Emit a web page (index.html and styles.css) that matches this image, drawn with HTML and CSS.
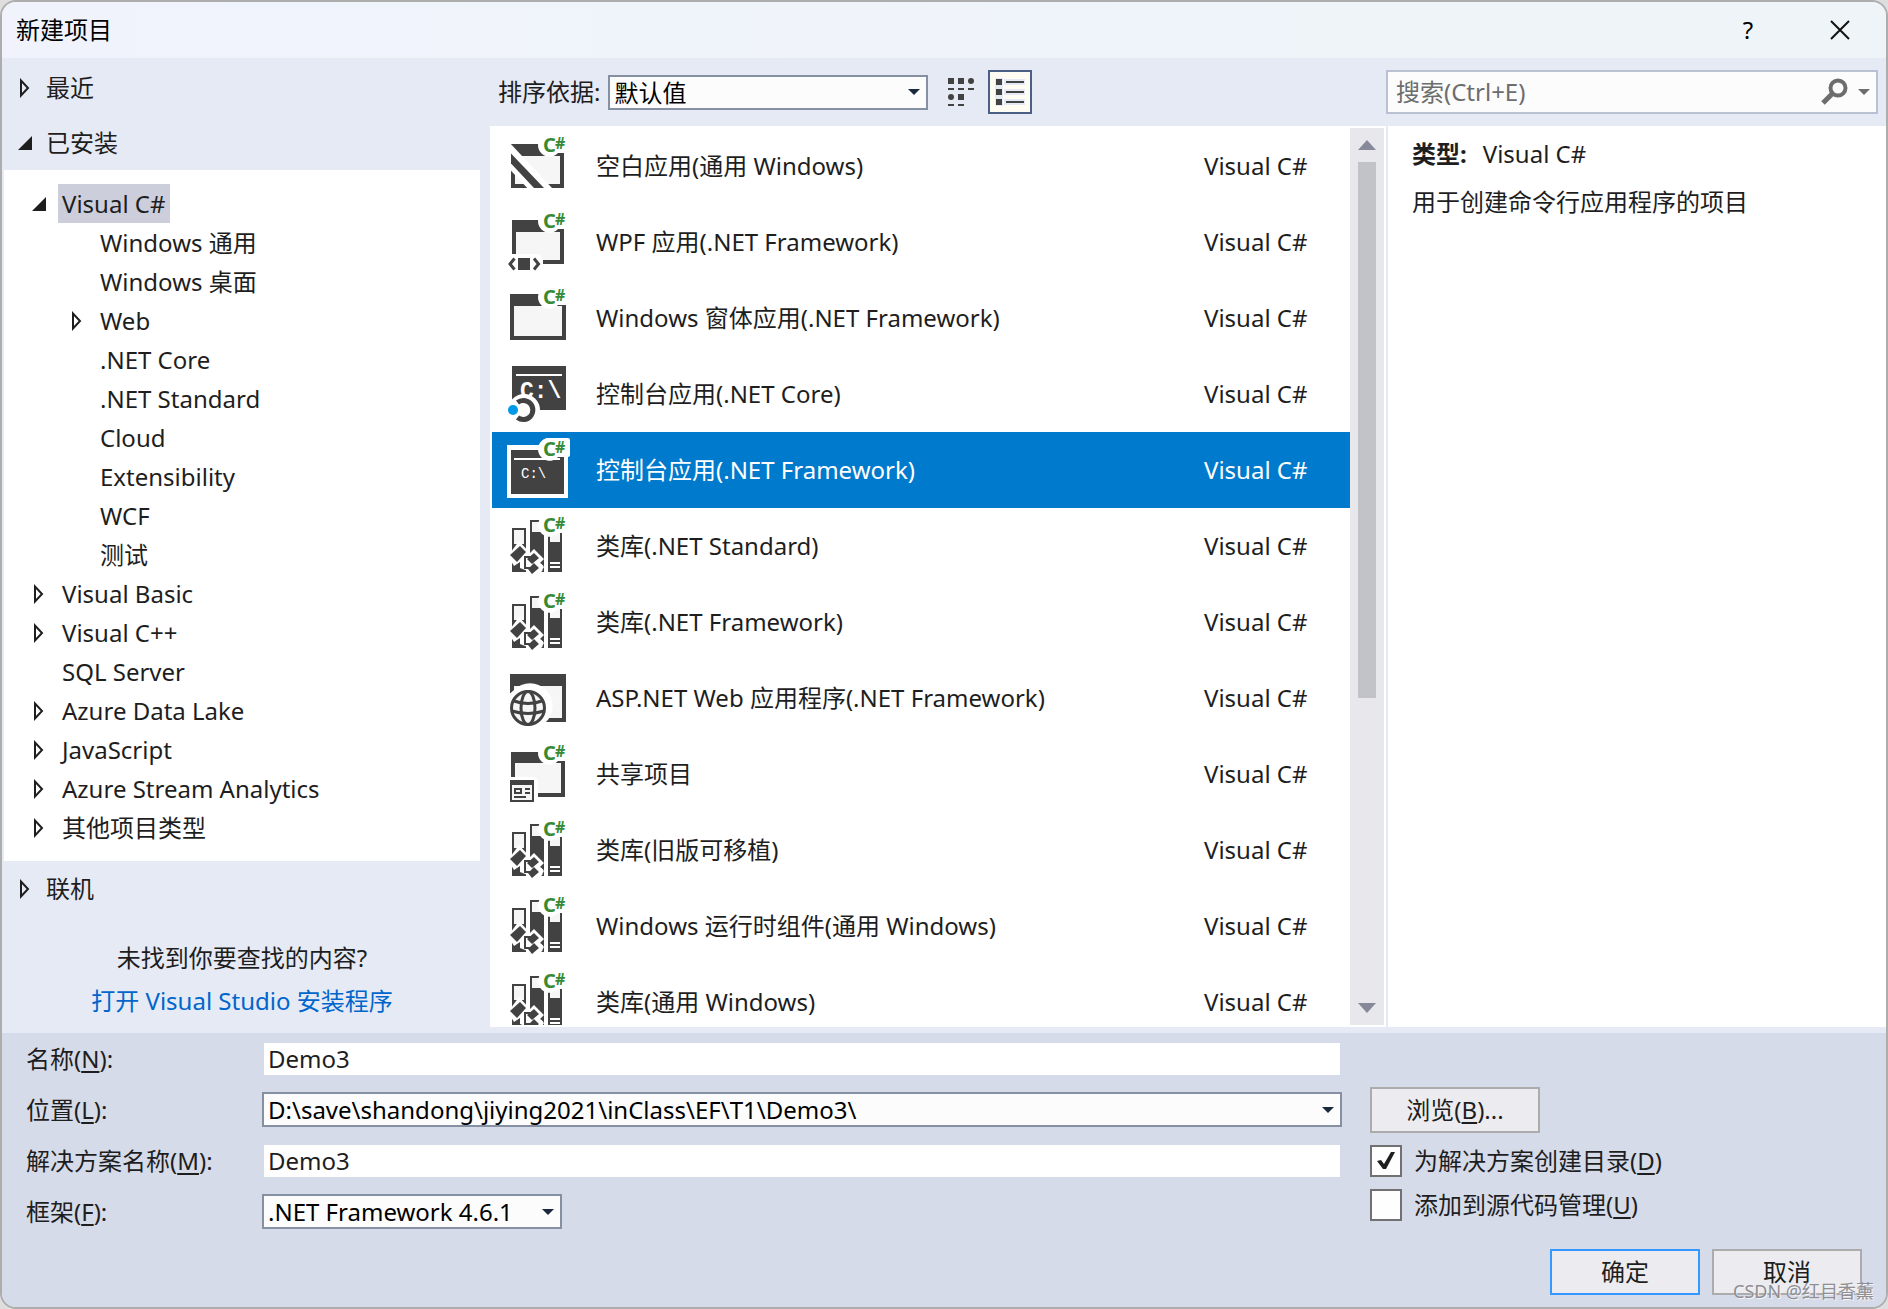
FILE: index.html
```html
<!DOCTYPE html>
<html lang="zh-CN">
<head>
    <meta charset="UTF-8">
    <meta name="viewport" content="width=device-width, initial-scale=1.0">
    <title>新建项目</title>
    <link rel="stylesheet" href="styles.css">
</head>
<body>
    <!-- shared icons -->
    <svg class="sprite" aria-hidden="true">
        <symbol id="closed" viewBox="0 0 12 20">
            <path d="M2 2.5V17.500L9 10Z" fill="none" stroke="#1e1e1e" stroke-width="2"/>
        </symbol>
        <symbol id="open" viewBox="0 0 14 14">
            <path d="M14 0V14H0Z" fill="#1e1e1e"/>
        </symbol>
        <symbol id="csharp" viewBox="0 0 64 64">
            <path d="M46 0H62Q64 0 64 2V17Q64 19 62 19H52A11.500 11.500 0 1 1 46 0Z" fill="#fff"/>
            <text class="cs" x="37" y="18" font-size="20">C</text>
            <text class="cs" x="49" y="15" font-size="16">#</text>
        </symbol>
        <symbol id="blank" viewBox="0 0 64 64">
            <path d="M5 10H58V54H5Z" fill="#424242"/>
            <path d="M9 22H54V50H9Z" fill="#f6f6f6"/>
            <path d="M-2 16L42 63" stroke="#fff" stroke-width="18"/>
            <path d="M5 19.500L38 54H28L5 29.500Z" fill="#424242"/>
            <path d="M0 54H62V64H0Z" fill="#fff"/>
            <use href="#csharp"/>
        </symbol>
        <symbol id="wpf" viewBox="0 0 64 64">
            <path d="M6 10H58V54H6Z" fill="#424242"/>
            <path d="M10 22H54V50H10Z" fill="#f6f6f6"/>
            <path d="M0 44H33L37 50V64H0Z" fill="#fff"/>
            <path d="M12 48H24V60H12Z" fill="#424242"/>
            <path d="M8.500 48.500L4 54L8.500 59.500M28 48.500L32.500 54L28 59.500" fill="none" stroke="#424242" stroke-width="3"/>
            <use href="#csharp"/>
        </symbol>
        <symbol id="form" viewBox="0 0 64 64">
            <path d="M4 8H60V54H4Z" fill="#424242"/>
            <path d="M8 20H56V50H8Z" fill="#f6f6f6"/>
            <use href="#csharp"/>
        </symbol>
        <symbol id="core" viewBox="0 0 64 64">
            <path d="M6 4H60V48H6Z" fill="#424242"/>
            <path d="M10 12H56V14H10Z" fill="#fff"/>
            <text class="prompt" x="14" y="36" font-size="23" font-weight="bold">C:\</text>
            <circle cx="18" cy="48" r="16" fill="#fff"/>
            <path d="M11.500 40.500A9.500 9.500 0 1 1 11.500 55.500" fill="none" stroke="#424242" stroke-width="5"/>
            <circle cx="7" cy="48" r="5" fill="#0099e5"/>
        </symbol>
        <symbol id="console" viewBox="0 0 64 64">
            <path d="M1 7H62V60H1Z" fill="#fff"/>
            <path d="M5 12H58V56H5Z" fill="#424242"/>
            <path d="M8 20H54V22H8Z" fill="#fff"/>
            <text class="prompt" x="15" y="40" font-size="14">C:\</text>
            <use href="#csharp"/>
        </symbol>
        <symbol id="library" viewBox="0 0 64 64">
            <path d="M6 14H20V58H6ZM24 6H38V58H24ZM42 16H56V58H42Z" fill="#424242"/>
            <path d="M8 16H18V30H8ZM26 8H36V18H26ZM44 16H54V28H44Z" fill="#f6f6f6"/>
            <path d="M44 48H54V50H44ZM44 52H54V54H44Z" fill="#fff"/>
            <path d="M13 27L24 39L28 35L38 45L34 49L38 53L35 58H24L14 54V48L8 52L2 42Z" fill="#fff"/>
            <path d="M6 51L10 54H14V58H6Z" fill="#424242"/>
            <path d="M14 32L20 38L11 48L4 41Z" fill="#424242"/>
            <path d="M18 43H27M19 43V54H26" fill="none" stroke="#424242" stroke-width="2"/>
            <path d="M28 39L33 44L26 50L21 45ZM28 49L33 54L26 60L22 55Z" fill="#424242"/>
            <path d="M34 50L36 52L34 54M34 55L36 57" fill="none" stroke="#fff" stroke-width="2"/>
            <use href="#csharp"/>
        </symbol>
        <symbol id="web" viewBox="0 0 64 64">
            <path d="M4 8H60V56H4Z" fill="#424242"/>
            <path d="M8 20H56V52H8Z" fill="#f6f6f6"/>
            <path d="M0 60V31L8 24A22 22 0 0 1 40 56L36 62Z" fill="#fff"/>
            <g fill="none" stroke="#424242" stroke-width="3">
                <circle cx="22" cy="42" r="16.500" fill="#f6f6f6"/>
                <ellipse cx="22" cy="42" rx="7" ry="16.500"/>
                <path d="M8 35Q22 40 36 35M6 45Q22 50 38 45"/>
            </g>
        </symbol>
        <symbol id="shared" viewBox="0 0 64 64">
            <path d="M5 10H59V55H5Z" fill="#424242"/>
            <path d="M9 21H55V51H9Z" fill="#f6f6f6"/>
            <path d="M0 35H28L32 38V64H0Z" fill="#fff"/>
            <path d="M4 38H28V60H4Z" fill="#424242"/>
            <path d="M6 43H26V58H6Z" fill="#f6f6f6"/>
            <path d="M9 47H15V51H9ZM19 47H24M19 51H24M8 55H20" fill="none" stroke="#424242" stroke-width="2"/>
            <use href="#csharp"/>
        </symbol>
    </svg>

    <div class="dialog">
        <header class="titlebar">
            <h1>新建项目</h1>
            <button class="caption-btn" type="button" aria-label="帮助">?</button>
            <button class="caption-btn" type="button" aria-label="关闭">
                <svg width="20" height="20" viewBox="0 0 20 20"><path d="M1 1L19 19M19 1L1 19" stroke="#111" stroke-width="2"/></svg>
            </button>
        </header>

        <main class="content">
            <nav class="sidebar">
                <div class="group"><svg class="arrow"><use href="#closed"/></svg>最近</div>
                <div class="group"><svg class="arrow open"><use href="#open"/></svg>已安装</div>
                <ul class="tree">
                    <li><svg class="arrow open"><use href="#open"/></svg><span class="current">Visual C#</span></li>
                    <li class="sub"><span>Windows 通用</span></li>
                    <li class="sub"><span>Windows 桌面</span></li>
                    <li class="sub"><svg class="arrow"><use href="#closed"/></svg><span>Web</span></li>
                    <li class="sub"><span>.NET Core</span></li>
                    <li class="sub"><span>.NET Standard</span></li>
                    <li class="sub"><span>Cloud</span></li>
                    <li class="sub"><span>Extensibility</span></li>
                    <li class="sub"><span>WCF</span></li>
                    <li class="sub"><span>测试</span></li>
                    <li><svg class="arrow"><use href="#closed"/></svg><span>Visual Basic</span></li>
                    <li><svg class="arrow"><use href="#closed"/></svg><span>Visual C++</span></li>
                    <li><span>SQL Server</span></li>
                    <li><svg class="arrow"><use href="#closed"/></svg><span>Azure Data Lake</span></li>
                    <li><svg class="arrow"><use href="#closed"/></svg><span>JavaScript</span></li>
                    <li><svg class="arrow"><use href="#closed"/></svg><span>Azure Stream Analytics</span></li>
                    <li><svg class="arrow"><use href="#closed"/></svg><span>其他项目类型</span></li>
                </ul>
                <div class="group"><svg class="arrow"><use href="#closed"/></svg>联机</div>
                <div class="missing">
                    <p>未找到你要查找的内容?</p>
                    <a href="#">打开 Visual Studio 安装程序</a>
                </div>
            </nav>

            <section class="templates">
                <div class="toolbar">
                    <label for="sort">排序依据:</label>
                    <select id="sort" class="sort"><option>默认值</option></select>
                    <button class="view-btn" type="button" aria-label="小图标">
                        <svg width="32" height="32" viewBox="0 0 32 32" fill="#424242">
                            <path d="M6 2H12V8H6ZM16 2H22V8H16ZM16 18H22V24H16ZM6 12H12V14H6ZM16 12H22V14H16ZM26 12H32V14H26ZM6 28H12V30H6ZM16 28H22V30H16Z"/>
                            <circle cx="29" cy="5" r="3"/><circle cx="9" cy="21" r="3"/>
                        </svg>
                    </button>
                    <button class="view-btn active" type="button" aria-label="列表">
                        <svg width="32" height="32" viewBox="0 0 32 32">
                            <path d="M1 2H9V30H1ZM10 3H31V9H10ZM10 13H31V19H10ZM10 23H31V29H10Z" fill="#e6eaf5"/>
                            <path d="M2 3H8V9H2ZM2 13H8V19H2ZM2 23H8V29H2ZM12 5H30V7H12ZM12 15H30V17H12ZM12 25H30V27H12Z" fill="#424242"/>
                        </svg>
                    </button>
                </div>
                <div class="list-box">
                    <ul class="list">
                        <li><svg><use href="#blank"/></svg><span>空白应用(通用 Windows)</span><em>Visual C#</em></li>
                        <li><svg><use href="#wpf"/></svg><span>WPF 应用(.NET Framework)</span><em>Visual C#</em></li>
                        <li><svg><use href="#form"/></svg><span>Windows 窗体应用(.NET Framework)</span><em>Visual C#</em></li>
                        <li><svg><use href="#core"/></svg><span>控制台应用(.NET Core)</span><em>Visual C#</em></li>
                        <li class="selected"><svg><use href="#console"/></svg><span>控制台应用(.NET Framework)</span><em>Visual C#</em></li>
                        <li><svg><use href="#library"/></svg><span>类库(.NET Standard)</span><em>Visual C#</em></li>
                        <li><svg><use href="#library"/></svg><span>类库(.NET Framework)</span><em>Visual C#</em></li>
                        <li><svg><use href="#web"/></svg><span>ASP.NET Web 应用程序(.NET Framework)</span><em>Visual C#</em></li>
                        <li><svg><use href="#shared"/></svg><span>共享项目</span><em>Visual C#</em></li>
                        <li><svg><use href="#library"/></svg><span>类库(旧版可移植)</span><em>Visual C#</em></li>
                        <li><svg><use href="#library"/></svg><span>Windows 运行时组件(通用 Windows)</span><em>Visual C#</em></li>
                        <li><svg><use href="#library"/></svg><span>类库(通用 Windows)</span><em>Visual C#</em></li>
                    </ul>
                    <div class="scrollbar">
                        <svg width="18" height="10" viewBox="0 0 18 10"><path d="M9 0L18 10H0Z" fill="#868999"/></svg>
                        <div class="track"><div class="thumb"></div></div>
                        <svg width="18" height="10" viewBox="0 0 18 10"><path d="M0 0H18L9 10Z" fill="#868999"/></svg>
                    </div>
                </div>
            </section>

            <aside class="details">
                <div class="search">
                    <input type="text" placeholder="搜索(Ctrl+E)" aria-label="搜索">
                    <svg width="28" height="28" viewBox="0 0 28 28" fill="none" stroke="#6d6d6d">
                        <circle cx="18" cy="10" r="7.500" stroke-width="4"/>
                        <path d="M13 15L3 25" stroke-width="5"/>
                    </svg>
                    <svg width="12" height="6" viewBox="0 0 12 6"><path d="M0 0H12L6 6Z" fill="#6d6d6d"/></svg>
                </div>
                <div class="info">
                    <p><b>类型:</b>Visual C#</p>
                    <p>用于创建命令行应用程序的项目</p>
                </div>
            </aside>
        </main>

        <form class="settings">
            <div class="fields">
                <label for="name">名称(<u>N</u>):</label>
                <input id="name" type="text" value="Demo3">
                <label for="location">位置(<u>L</u>):</label>
                <select id="location"><option>D:\save\shandong\jiying2021\inClass\EF\T1\Demo3\</option></select>
                <label for="solution">解决方案名称(<u>M</u>):</label>
                <input id="solution" type="text" value="Demo3">
                <label for="framework">框架(<u>F</u>):</label>
                <select id="framework" class="framework"><option>.NET Framework 4.6.1</option></select>
            </div>
            <div class="options">
                <button class="btn browse" type="button">浏览(<u>B</u>)...</button>
                <div class="check">
                    <input id="create-dir" type="checkbox" checked>
                    <label for="create-dir">为解决方案创建目录(<u>D</u>)</label>
                </div>
                <div class="check">
                    <input id="source-control" type="checkbox">
                    <label for="source-control">添加到源代码管理(<u>U</u>)</label>
                </div>
                <div class="actions">
                    <button class="btn primary" type="submit">确定</button>
                    <button class="btn" type="button">取消</button>
                </div>
            </div>
        </form>
        <div class="watermark">CSDN @红目香薰</div>
    </div>
</body>
</html>
```
FILE: styles.css
```css
* {
    box-sizing: border-box;
}
body {
    margin: 0;
    background-color: #dedede;
    color: #1e1e1e;
    font-family: "Noto Sans", "Noto Sans CJK SC", sans-serif;
    font-size: 24px;
    line-height: 32px;
}
h1, p, ul {
    margin: 0;
    padding: 0;
}
ul {
    list-style: none;
}
button, input, select {
    font: inherit;
    color: inherit;
    margin: 0;
}
u {
    text-decoration-thickness: 2px;
    text-underline-offset: 3px;
}
.sprite {
    display: none;
}
.cs {
    fill: #388a34;
    font-family: "Noto Sans", sans-serif;
    font-weight: bold;
}
.prompt {
    fill: #fff;
    font-family: "Liberation Mono", monospace;
}

.dialog {
    position: relative;
    display: flex;
    flex-direction: column;
    height: 100vh;
    overflow: hidden;
    border: 2px solid #adadad;
    border-radius: 16px;
    background-color: #e6eaf5;
}
.titlebar {
    display: flex;
    align-items: center;
    height: 56px;
    padding-left: 14px;
    background: linear-gradient(to right, #f0f3fb, #eef4f8);
}
.titlebar h1 {
    flex: 1;
    font-size: 24px;
    font-weight: normal;
    color: #000;
}
.caption-btn {
    display: flex;
    align-items: center;
    justify-content: center;
    width: 92px;
    height: 54px;
    border: 0;
    background: none;
    color: #000;
}

.content {
    flex: 1;
    min-height: 0;
    display: grid;
    grid-template-columns: 488px 1fr 500px;
    padding-bottom: 6px;
}
.sidebar {
    padding: 2px 10px 0 2px;
}
.group {
    display: flex;
    align-items: center;
    gap: 14px;
    height: 55px;
    padding-left: 14px;
}
.arrow {
    width: 14px;
    height: 20px;
    flex: none;
}
.arrow.open {
    height: 14px;
}
.tree {
    padding: 14px 0;
    background-color: #fff;
}
.tree li {
    display: flex;
    align-items: center;
    height: 39px;
    padding-left: 28px;
}
.tree .sub {
    padding-left: 66px;
}
.tree .arrow {
    margin-right: 12px;
}
.tree span {
    padding: 0 4px;
    line-height: 39px;
}
.tree span:first-child {
    margin-left: 26px;
}
.tree .current {
    background-color: #cccedb;
}
.missing {
    margin-top: 20px;
    text-align: center;
    line-height: 43px;
}
.missing a {
    color: #0066cc;
    text-decoration: none;
}

.templates, .details {
    display: flex;
    flex-direction: column;
    min-height: 0;
    min-width: 0;
}
.toolbar {
    display: flex;
    align-items: center;
    gap: 8px;
    height: 68px;
    padding-left: 8px;
}
select {
    appearance: none;
    height: 35px;
    padding: 0 30px 0 4px;
    border: 2px solid #8591a2;
    border-radius: 0;
    line-height: 31px;
    color: #000;
    background: #fcfcfc url("data:image/svg+xml,%3Csvg xmlns='http://www.w3.org/2000/svg' width='12' height='6'%3E%3Cpath d='M0 0H12L6 6Z' fill='%231b293e'/%3E%3C/svg%3E") no-repeat right 6px center;
}
.sort {
    width: 320px;
}
.view-btn {
    display: flex;
    align-items: center;
    justify-content: center;
    width: 44px;
    height: 44px;
    padding: 0;
    border: 2px solid transparent;
    background: none;
}
.view-btn.active {
    border-color: #4b5f85;
    background-color: #fffcf4;
}
.list-box {
    flex: 1;
    min-height: 0;
    display: flex;
    padding: 2px;
    background-color: #fff;
}
.list {
    flex: 1;
    overflow: hidden;
}
.list li {
    display: flex;
    align-items: center;
    height: 76px;
    padding-left: 14px;
}
.list svg {
    width: 64px;
    height: 64px;
    flex: none;
}
.list span {
    flex: 1;
    padding-left: 26px;
}
.list em {
    width: 146px;
    font-style: normal;
}
.list .selected {
    background-color: #007acc;
    color: #fff;
}
.scrollbar {
    display: flex;
    flex-direction: column;
    align-items: center;
    width: 34px;
    padding: 12px 0;
    background-color: #e8e8ec;
}
.track {
    flex: 1;
    width: 18px;
    padding: 12px 0 16px;
}
.thumb {
    height: 65%;
    background-color: #c2c3c9;
}

.search {
    display: flex;
    align-items: center;
    height: 44px;
    margin: 12px 8px 12px 0;
    padding-right: 6px;
    border: 2px solid #b9c2d2;
    background-color: #fcfcfc;
}
.search input {
    flex: 1;
    min-width: 0;
    padding: 0 8px;
    border: 0;
    background: none;
}
.search input::placeholder {
    color: #6d6d6d;
    opacity: 1;
}
.search svg + svg {
    margin-left: 10px;
}
.info {
    flex: 1;
    padding: 12px 24px;
    border-left: 2px solid #e6eaf5;
    background-color: #fff;
}
.info p {
    margin-bottom: 16px;
}
.info b {
    margin-right: 16px;
}

.settings {
    display: flex;
    gap: 28px;
    padding-left: 24px;
    background-color: #d6dbe9;
}
.fields {
    flex: 1;
    display: grid;
    grid-template-columns: 236px 1fr;
    grid-auto-rows: 51px;
    align-items: center;
}
.fields input {
    height: 32px;
    margin: 0 2px;
    padding: 0 4px;
    border: 0;
    background-color: #fff;
}
.framework {
    width: 300px;
}
.options {
    display: flex;
    flex-direction: column;
    gap: 12px;
    width: 516px;
    padding: 54px 24px 12px 0;
}
.btn {
    width: 150px;
    height: 46px;
    padding: 0;
    border: 2px solid #acacac;
    background-color: #ececf0;
}
.btn.primary {
    border-color: #3399ff;
}
.browse {
    width: 170px;
}
.check {
    display: flex;
    align-items: center;
    gap: 12px;
}
.check input {
    appearance: none;
    width: 32px;
    height: 32px;
    border: 2px solid #717171;
    background-color: #fefefe;
}
.check input:checked {
    background: #fefefe url("data:image/svg+xml,%3Csvg xmlns='http://www.w3.org/2000/svg' width='18' height='18'%3E%3Cpath d='M0 9L4 8L7 12L14 0H18L9 17H6Z' fill='%231e1e1e'/%3E%3C/svg%3E") no-repeat center;
}
.actions {
    display: flex;
    justify-content: flex-end;
    gap: 12px;
    margin-top: 16px;
}
/* sits over the cancel button */
.watermark {
    position: absolute;
    right: 12px;
    bottom: 4px;
    font-size: 18px;
    line-height: 24px;
    color: #8e8e94;
    text-shadow: 1px 1px 0 #f4f4f4;
}
```
